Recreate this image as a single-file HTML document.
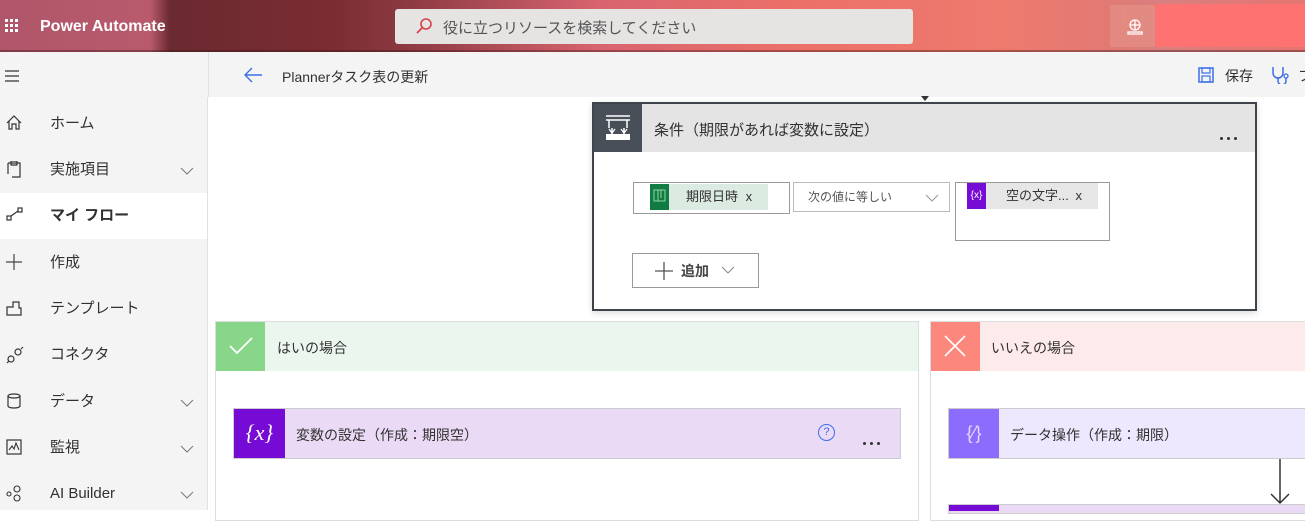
<!DOCTYPE html>
<html><head><meta charset="utf-8"><style>
*{box-sizing:border-box;margin:0;padding:0}
body{width:1305px;height:510px;overflow:hidden;background:#fff;font-family:"Liberation Sans","Noto Sans CJK JP",sans-serif;color:#323130;position:relative;font-size:14px}
.abs{position:absolute}
#hdr{left:0;top:0;width:1305px;height:52px;background:linear-gradient(90deg,#b0566a 0,#b85a6c 150px,#6a2a30 170px,#7a2c32 330px,#8a3840 400px,#d86470 600px,#ec7068 800px,#ee7a6e 1000px,#e27a74 1110px,#d88080 1160px,#e57570 1300px)}
#nav{left:0;top:52px;width:1305px;height:45px;background:#f4f4f4}
#side{left:0;top:97px;width:208px;height:413px;background:#f4f4f4;border-right:1px solid #e1e1e1}
.item{position:absolute;left:0;width:207px;height:46px;font-size:15px;line-height:46px}
.item .t{position:absolute;left:50px}
.item svg{position:absolute;left:6px;top:14px}
.item svg.chev{left:180px;top:20px}
.dots{position:absolute;height:4px}
.dots i{display:inline-block;width:3px;height:3px;background:#333;border-radius:50%;margin-right:4px}
</style></head><body>
<div id="hdr" class="abs"></div>
<div class="abs" style="left:0;top:50px;width:1305px;height:3px;background:rgba(60,20,20,.4)"></div>
<svg class="abs" style="left:5px;top:19px" width="14" height="14"><g fill="#fff"><rect x="0" y="0" width="3" height="3"/><rect x="5" y="0" width="3" height="3"/><rect x="10" y="0" width="3" height="3"/><rect x="0" y="5" width="3" height="3"/><rect x="5" y="5" width="3" height="3"/><rect x="10" y="5" width="3" height="3"/><rect x="0" y="10" width="3" height="3"/><rect x="5" y="10" width="3" height="3"/><rect x="10" y="10" width="3" height="3"/></g></svg>
<div class="abs" style="left:40px;top:18px;color:#fff;font-weight:bold;font-size:16px">Power Automate</div>
<div class="abs" style="left:395px;top:9px;width:518px;height:35px;background:#e6e4e3;border-radius:3px"></div>
<svg class="abs" style="left:415px;top:17px" width="18" height="18"><circle cx="11" cy="7" r="5" fill="none" stroke="#d9414a" stroke-width="1.6"/><path d="M7.5 10.5 L2 16" stroke="#d9414a" stroke-width="1.8"/></svg>
<div class="abs" style="left:443px;top:17px;font-size:15px;color:#555">役に立つリソースを検索してください</div>
<div class="abs" style="left:1110px;top:5px;width:48px;height:42px;background:#e49086;opacity:.7"></div>
<svg class="abs" style="left:1126px;top:18px" width="18" height="18"><circle cx="9" cy="7" r="5" fill="none" stroke="#fff" stroke-width="1.3"/><path d="M4 7h10M9 2v10M2 14h14v2H2z" stroke="#fff" stroke-width="1.3" fill="none"/></svg>
<div class="abs" style="left:1155px;top:4px;width:150px;height:43px;background:#ff7272"></div>

<div id="nav" class="abs"></div>
<div class="abs" style="left:208px;top:52px;width:1px;height:45px;background:#e1e1e1"></div>
<svg class="abs" style="left:5px;top:70px" width="16" height="12"><path d="M0 1h14M0 6h14M0 11h14" stroke="#333" stroke-width="1.2"/></svg>
<svg class="abs" style="left:243px;top:67px" width="20" height="16"><path d="M19 8H2M9 1L2 8l7 7" stroke="#3b6ee8" stroke-width="1.4" fill="none"/></svg>
<div class="abs" style="left:282px;top:67px;font-size:14px">Plannerタスク表の更新</div>
<svg class="abs" style="left:1198px;top:67px" width="16" height="16"><rect x="1" y="1" width="14" height="14" fill="none" stroke="#3b6ee8" stroke-width="1.5"/><rect x="4" y="1" width="8" height="5" fill="none" stroke="#3b6ee8" stroke-width="1.2"/><rect x="4" y="9" width="8" height="6" fill="none" stroke="#3b6ee8" stroke-width="1.2"/></svg>
<div class="abs" style="left:1225px;top:66px;font-size:14px">保存</div>
<svg class="abs" style="left:1271px;top:66px" width="22" height="18"><path d="M2 1v6a5 5 0 0 0 10 0V1M7 12v3a4 4 0 0 0 8 0v-3" stroke="#3b6ee8" stroke-width="1.5" fill="none"/><circle cx="15" cy="10" r="2" fill="none" stroke="#3b6ee8" stroke-width="1.3"/></svg>
<div class="abs" style="left:1298px;top:66px;font-size:14px">フ</div>

<div id="side" class="abs">
<div class="item" style="top:4px"><svg width="16" height="16"><path d="M1 8L8 1l7 7M3 6v8h3v-5h4v5h3V6" fill="none" stroke="#333" stroke-width="1.2"/></svg><span class="t">ホーム</span></div>
<div class="item" style="top:50px"><svg width="16" height="18"><path d="M2 2h12v14H6M2 2v11M5 0h6v4H5z" fill="none" stroke="#333" stroke-width="1.2"/></svg><span class="t">実施項目</span><svg class="chev" width="14" height="8"><path d="M1 1l6 6 6-6" stroke="#777" fill="none"/></svg></div>
<div class="item" style="top:96px;background:#fff"><svg width="18" height="14"><rect x="1" y="9" width="4" height="4" fill="none" stroke="#333" stroke-width="1.2"/><rect x="12" y="1" width="4" height="4" fill="none" stroke="#333" stroke-width="1.2"/><path d="M5 9l7-5" stroke="#333" stroke-width="1.2"/></svg><span class="t" style="font-weight:bold">マイ フロー</span></div>
<div class="item" style="top:143px"><svg width="16" height="16"><path d="M8 0v16M0 8h16" stroke="#444" stroke-width="1.2"/></svg><span class="t">作成</span></div>
<div class="item" style="top:189px"><svg width="16" height="16"><path d="M1 7h6V2h6v6h2v7H1z" fill="none" stroke="#333" stroke-width="1.2"/></svg><span class="t">テンプレート</span></div>
<div class="item" style="top:235px"><svg width="18" height="18"><circle cx="5" cy="13" r="3" fill="none" stroke="#333" stroke-width="1.2"/><circle cx="12" cy="6" r="3" fill="none" stroke="#333" stroke-width="1.2"/><path d="M1 17l2-2M15 3l2-2" stroke="#333" stroke-width="1.2"/></svg><span class="t">コネクタ</span></div>
<div class="item" style="top:282px"><svg width="16" height="16"><ellipse cx="8" cy="3" rx="6" ry="2" fill="none" stroke="#333" stroke-width="1.2"/><path d="M2 3v10a6 2 0 0 0 12 0V3" fill="none" stroke="#333" stroke-width="1.2"/></svg><span class="t">データ</span><svg class="chev" width="14" height="8"><path d="M1 1l6 6 6-6" stroke="#777" fill="none"/></svg></div>
<div class="item" style="top:328px"><svg width="16" height="16"><rect x="1" y="1" width="14" height="14" fill="none" stroke="#333" stroke-width="1.2"/><path d="M3 11l3-4 2 3 2-6 3 7" fill="none" stroke="#333" stroke-width="1.1"/></svg><span class="t">監視</span><svg class="chev" width="14" height="8"><path d="M1 1l6 6 6-6" stroke="#777" fill="none"/></svg></div>
<div class="item" style="top:374px"><svg width="18" height="18"><circle cx="3" cy="9" r="2" fill="none" stroke="#333" stroke-width="1.1"/><circle cx="11" cy="4" r="3" fill="none" stroke="#333" stroke-width="1.1"/><circle cx="11" cy="13" r="3" fill="none" stroke="#333" stroke-width="1.1"/></svg><span class="t">AI Builder</span><svg class="chev" width="14" height="8"><path d="M1 1l6 6 6-6" stroke="#777" fill="none"/></svg></div>
</div>

<!-- condition card -->
<div class="abs" style="left:921px;top:96px;width:0;height:0;border-left:4px solid transparent;border-right:4px solid transparent;border-top:5px solid #333"></div>
<div class="abs" style="left:592px;top:102px;width:665px;height:209px;border:2px solid #3f444a;background:#fff;box-shadow:0 2px 6px rgba(0,0,0,.15)"></div>
<div class="abs" style="left:594px;top:104px;width:661px;height:48px;background:#e4e4e4"></div>
<div class="abs" style="left:594px;top:104px;width:48px;height:48px;background:#484f58"></div>
<svg class="abs" style="left:604px;top:114px" width="28" height="28"><path d="M2 2h24M2 6h24M5 6v8M23 6v8M8 14v8M20 14v8" stroke="#fff" stroke-width="1.5" fill="none"/><path d="M2 20h24v6H2z" fill="#fff"/><path d="M5 15l3 4 3-4M17 15l3 4 3-4" stroke="#fff" stroke-width="1.3" fill="none"/></svg>
<div class="abs" style="left:654px;top:119px;font-size:15px">条件（期限があれば変数に設定）</div>
<div class="dots" style="left:1220px;top:127px"><i></i><i></i><i></i></div>
<div class="abs" style="left:633px;top:182px;width:157px;height:32px;border:1px solid #999"></div>
<div class="abs" style="left:650px;top:184px;width:19px;height:26px;background:#107c41"></div>
<svg class="abs" style="left:653px;top:189px" width="13" height="13"><rect x="1" y="1" width="11" height="11" fill="none" stroke="#8fd3a8" stroke-width="1"/><path d="M5 1v11M8 1v8" stroke="#8fd3a8"/></svg>
<div class="abs" style="left:669px;top:184px;width:99px;height:26px;background:#dcebe2;font-size:13px;line-height:26px;padding-left:17px">期限日時 <span style="margin-left:4px">x</span></div>
<div class="abs" style="left:793px;top:182px;width:157px;height:30px;border:1px solid #bbb;font-size:12px;color:#555;line-height:28px;padding-left:14px">次の値に等しい</div>
<svg class="abs" style="left:925px;top:194px" width="14" height="8"><path d="M1 1l6 6 6-6" stroke="#999" fill="none"/></svg>
<div class="abs" style="left:955px;top:182px;width:155px;height:59px;border:1px solid #999"></div>
<div class="abs" style="left:967px;top:183px;width:19px;height:26px;background:#770bd6;color:#fff;font-size:10px;line-height:26px;text-align:center">{x}</div>
<div class="abs" style="left:986px;top:183px;width:112px;height:26px;background:#e6e6e6;font-size:13px;line-height:26px;padding-left:20px">空の文字... <span style="margin-left:3px">x</span></div>
<div class="abs" style="left:632px;top:253px;width:127px;height:35px;border:1px solid #999"></div>
<svg class="abs" style="left:655px;top:262px" width="18" height="18"><path d="M9 0v18M0 9h18" stroke="#555" stroke-width="1.3"/></svg>
<div class="abs" style="left:681px;top:261px;font-size:14px;font-weight:bold;color:#444">追加</div>
<svg class="abs" style="left:721px;top:266px" width="14" height="8"><path d="M1 1l6 6 6-6" stroke="#888" fill="none"/></svg>

<!-- yes -->
<div class="abs" style="left:215px;top:321px;width:704px;height:200px;border:1px solid #ddd"></div>
<div class="abs" style="left:216px;top:322px;width:702px;height:49px;background:#ebf7ee"></div>
<div class="abs" style="left:216px;top:322px;width:49px;height:49px;background:#88d68a"></div>
<svg class="abs" style="left:228px;top:336px" width="26" height="20"><path d="M2 10l7 7L24 2" stroke="#fff" stroke-width="1.8" fill="none"/></svg>
<div class="abs" style="left:277px;top:338px;font-size:14px">はいの場合</div>
<div class="abs" style="left:233px;top:408px;width:668px;height:51px;background:#eadaf6;border:1px solid #ccc"></div>
<div class="abs" style="left:234px;top:409px;width:51px;height:49px;background:#770bd6;color:#fff;font-family:'Liberation Serif',serif;font-style:italic;font-size:22px;line-height:48px;text-align:center">{<i>x</i>}</div>
<div class="abs" style="left:296px;top:425px;font-size:14px">変数の設定（作成：期限空）</div>
<div class="abs" style="left:818px;top:424px;width:17px;height:17px;border:1.5px solid #3b6ee8;border-radius:50%;color:#3b6ee8;font-size:11px;text-align:center;line-height:14px">?</div>
<div class="dots" style="left:863px;top:432px"><i></i><i></i><i></i></div>

<!-- no -->
<div class="abs" style="left:930px;top:321px;width:380px;height:200px;border:1px solid #ddd"></div>
<div class="abs" style="left:931px;top:322px;width:380px;height:49px;background:#fdeaea"></div>
<div class="abs" style="left:931px;top:322px;width:49px;height:49px;background:#fc877d"></div>
<svg class="abs" style="left:943px;top:334px" width="24" height="24"><path d="M2 2l20 20M22 2L2 22" stroke="#fff" stroke-width="1.6"/></svg>
<div class="abs" style="left:991px;top:338px;font-size:14px">いいえの場合</div>
<div class="abs" style="left:948px;top:408px;width:370px;height:51px;background:#ede8fd;border:1px solid #ccc"></div>
<div class="abs" style="left:949px;top:409px;width:50px;height:49px;background:#8c6cfd;color:#e0d8ff;font-size:18px;line-height:48px;text-align:center">{⁄}</div>
<div class="abs" style="left:1010px;top:425px;font-size:14px">データ操作（作成：期限）</div>
<svg class="abs" style="left:1268px;top:459px" width="24" height="48"><path d="M12 0v44M3 35l9 9 9-9" stroke="#333" stroke-width="1.5" fill="none"/></svg>
<div class="abs" style="left:948px;top:504px;width:370px;height:10px;background:#eadaf6;border:1px solid #ccc"></div>
<div class="abs" style="left:949px;top:505px;width:50px;height:6px;background:#770bd6"></div>
</body></html>
